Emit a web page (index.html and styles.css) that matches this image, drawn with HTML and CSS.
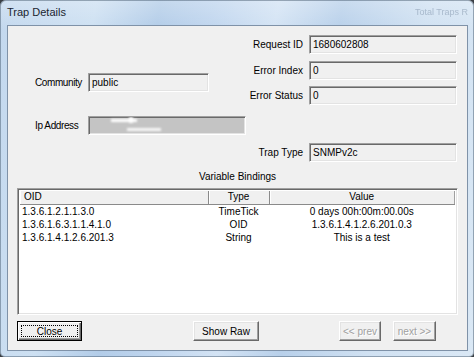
FILE: index.html
```html
<!DOCTYPE html>
<html>
<head>
<meta charset="utf-8">
<link rel="stylesheet" href="styles.css">
</head>
<body>
<div class="window">
  <div class="titlebar">
    <span class="title">Trap Details</span>
    <span class="ghost">Total Traps R</span>
  </div>
  <div class="client">
    <div class="top">
      <div class="col-left">
        <div class="row">
          <span class="label-left">Community</span>
          <div class="field w-community">public</div>
        </div>
        <div class="row row-ip">
          <span class="label-left">Ip Address</span>
          <div class="field field-ip w-ip">
            <svg class="smear" width="60" height="18" viewBox="0 0 60 18">
              <defs><filter id="b"><feGaussianBlur stdDeviation="0.8"/></filter></defs>
              <g fill="#ffffff" filter="url(#b)">
                <rect x="2" y="2" width="26" height="3"/>
                <rect x="20" y="0" width="4" height="6"/>
                <rect x="18" y="11" width="34" height="3" opacity="0.85"/>
              </g>
            </svg>
          </div>
        </div>
      </div>
      <div class="col-right">
        <div class="row">
          <span class="label-right">Request ID</span>
          <div class="field w-right">1680602808</div>
        </div>
        <div class="row row-gap">
          <span class="label-right">Error Index</span>
          <div class="field w-right">0</div>
        </div>
        <div class="row row-gap2">
          <span class="label-right">Error Status</span>
          <div class="field w-right">0</div>
        </div>
        <div class="row row-trap">
          <span class="label-right">Trap Type</span>
          <div class="field w-right">SNMPv2c</div>
        </div>
      </div>
    </div>
    <div class="section-title">Variable Bindings</div>
    <div class="list">
      <table class="bindings">
        <thead>
          <tr>
            <th class="c-oid">OID</th>
            <th class="c-type">Type</th>
            <th class="c-value">Value</th>
          </tr>
        </thead>
        <tbody>
          <tr><td class="c-oid">1.3.6.1.2.1.1.3.0</td><td class="c-type">TimeTick</td><td class="c-value">0 days 00h:00m:00.00s</td></tr>
          <tr><td class="c-oid">1.3.6.1.6.3.1.1.4.1.0</td><td class="c-type">OID</td><td class="c-value">1.3.6.1.4.1.2.6.201.0.3</td></tr>
          <tr><td class="c-oid">1.3.6.1.4.1.2.6.201.3</td><td class="c-type">String</td><td class="c-value">This is a test</td></tr>
        </tbody>
      </table>
    </div>
    <div class="buttons">
      <button class="btn btn-close"><span class="focus">Close</span></button>
      <button class="btn btn-raw">Show Raw</button>
      <button class="btn btn-prev" disabled>&lt;&lt; prev</button>
      <button class="btn btn-next" disabled>next &gt;&gt;</button>
    </div>
  </div>
</div>
</body>
</html>
```

FILE: styles.css
```css
* { box-sizing: border-box; }

body {
  margin: 0;
  background: #3a3f45;
  font-family: "Liberation Sans", Arial, sans-serif;
  font-size: 10px;
  color: #000;
}

.window {
  width: 474px;
  height: 357px;
  border-radius: 6px 6px 5px 5px;
  overflow: hidden;
  padding: 0 6px 6px 7px;
  display: flex;
  flex-direction: column;
  background:
    linear-gradient(to bottom, rgba(255,255,255,0.25), rgba(255,255,255,0) 30px),
    linear-gradient(100deg, #c3d8ee 0%, #cde0f2 18%, #b2cce8 30%, #bfd5ee 40%, #d3e3f4 52%, #b8d0ea 64%, #d0e1f2 80%, #dae8f5 100%);
  box-shadow: inset 0 0 0 1px rgba(60, 80, 100, 0.45);
}

.titlebar {
  height: 25px;
  flex: none;
  display: flex;
  align-items: center;
  padding-bottom: 1px;
  white-space: nowrap;
}

.title {
  font-size: 11px;
  color: #1b2430;
}

.ghost {
  margin-left: auto;
  font-size: 9px;
  color: rgba(110, 130, 155, 0.45);
  filter: blur(0.7px);
}

.client {
  flex: 1;
  border: 1px solid #7f92a8;
  background: #f0f0f0;
  display: flex;
  flex-direction: column;
}

.top {
  display: flex;
  padding: 0 10px 0 27px;
  height: 137px;
}

.col-left {
  width: 210px;
  padding-top: 47px;
}

.col-right {
  flex: 1;
  padding-top: 9px;
}

.row {
  display: flex;
  align-items: center;
  height: 19px;
}

.row-ip { margin-top: 24px; }
.row-gap { margin-top: 7px; }
.row-gap2 { margin-top: 6px; }
.row-trap { margin-top: 38px; }

.label-left {
  width: 53px;
  flex: none;
  letter-spacing: -0.4px;
}

.label-right {
  flex: 1;
  text-align: right;
  padding-right: 6px;
}

.field {
  height: 19px;
  flex: none;
  border-style: solid;
  border-width: 1px;
  border-color: #a0a0a0 #ffffff #ffffff #a0a0a0;
  box-shadow: inset 1px 1px 0 #696969, inset -1px -1px 0 #e3e3e3;
  padding: 2px 0 0 3px;
  line-height: 13px;
  white-space: nowrap;
  overflow: hidden;
}

.w-community { width: 121px; }
.w-ip { width: 158px; }
.w-right { width: 148px; }

.field-ip {
  background: #c4c4c4;
  padding: 0 0 0 20px;
}

.smear { display: block; }

.section-title {
  text-align: center;
  line-height: 13px;
  margin-top: 7px;
}

.list {
  margin: 5px 9px 0 9px;
  height: 127px;
  flex: none;
  background: #fff;
  border-style: solid;
  border-width: 1px;
  border-color: #a0a0a0 #ffffff #ffffff #a0a0a0;
  box-shadow: inset 1px 1px 0 #696969, inset -1px -1px 0 #e3e3e3;
  padding: 2px;
}

.bindings {
  width: 100%;
  border-collapse: collapse;
  table-layout: fixed;
}

.bindings th {
  height: 13px;
  padding: 0;
  font-weight: normal;
  line-height: 12px;
  background: #f0f0f0;
  border-bottom: 1px solid #8a8a8a;
  border-right: 1px solid #8a8a8a;
  box-shadow: inset 1px 0 0 #ffffff;
}

.bindings th.c-oid { width: 188px; text-align: left; padding-left: 4px; }
.bindings th.c-type { width: 61px; text-align: center; }
.bindings th.c-value { text-align: center; border-right: 1px solid #a0a0a0; }

.bindings td {
  padding: 0;
  line-height: 13px;
  height: 13px;
  white-space: nowrap;
}

.bindings td.c-oid { padding-left: 2px; }
.bindings td.c-type { text-align: center; }
.bindings td.c-value { text-align: center; }

.buttons {
  display: flex;
  padding-left: 9px;
  margin-top: 6px;
}

.btn {
  height: 20px;
  font-family: "Liberation Sans", Arial, sans-serif;
  font-size: 10px;
  color: #000;
  background: #f0f0f0;
  border-style: solid;
  border-width: 1px;
  border-color: #ffffff #696969 #696969 #ffffff;
  box-shadow: inset -1px -1px 0 #a0a0a0, inset 1px 1px 0 #e3e3e3;
  padding: 0;
  margin: 0;
}

.btn-close {
  width: 65px;
  border: 1px solid #000;
  box-shadow: inset 1px 1px 0 #ffffff, inset -1px -1px 0 #696969, inset -2px -2px 0 #a0a0a0;
  padding: 3px;
}

.focus {
  display: flex;
  align-items: center;
  justify-content: center;
  height: 100%;
  border: 1px dotted #000;
}

.btn-raw { width: 66px; margin-left: 111px; }

.btn-prev { width: 42px; margin-left: 80px; }

.btn-next { width: 43px; margin-left: 12px; }

.btn:disabled {
  color: #a0a0a0;
  text-shadow: 1px 1px 0 #ffffff;
}
```
